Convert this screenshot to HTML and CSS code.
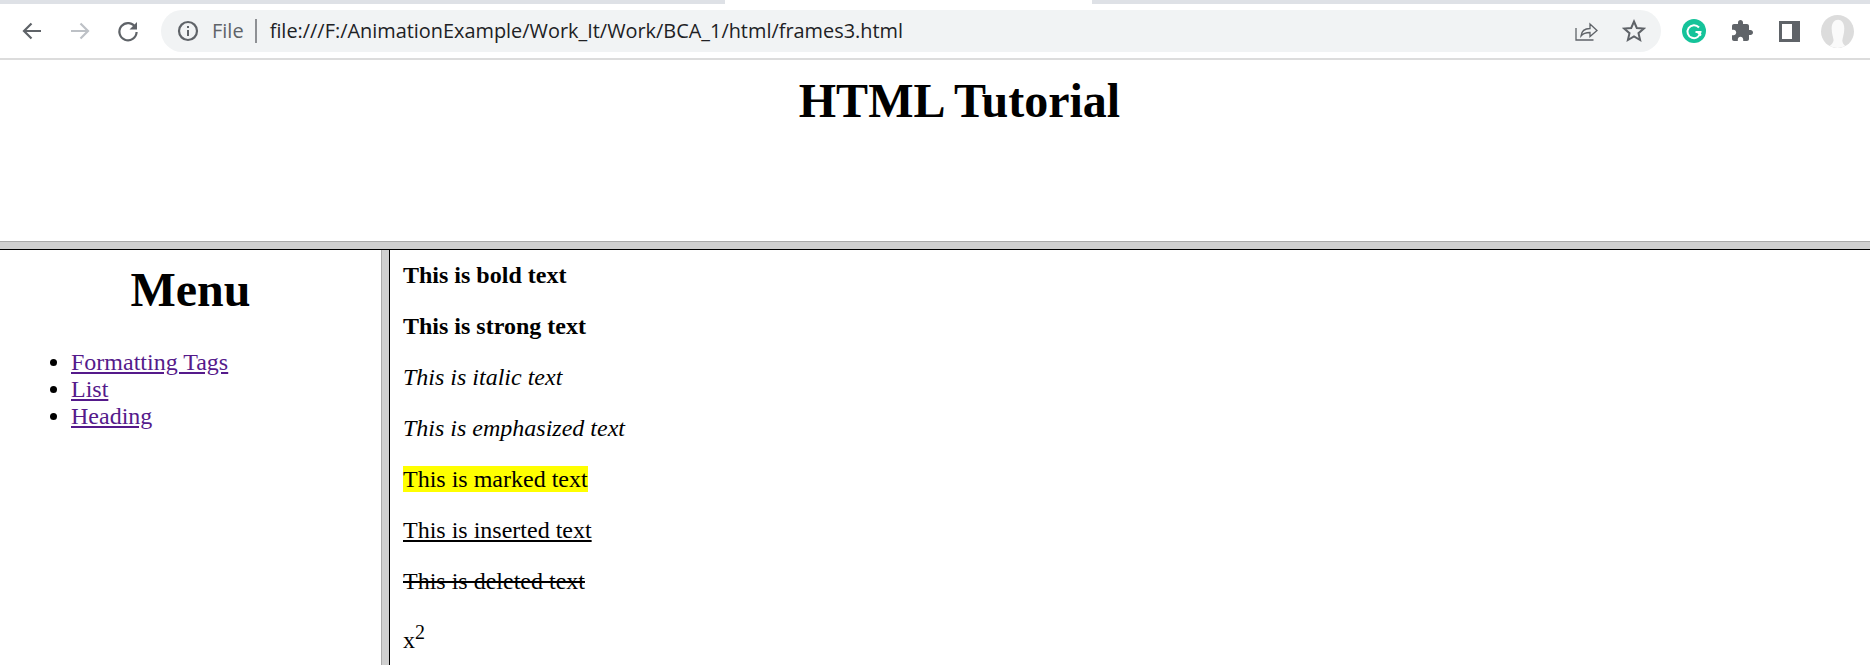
FILE: index.html
```html
<!DOCTYPE html>
<html lang="en">
<head>
<meta charset="utf-8">
<title>frames3</title>
<link rel="stylesheet" href="styles.css">
</head>
<body>
<header class="chrome">
  <div class="tabstrip"><div class="tabstrip-gap"></div></div>
  <div class="toolbar">
    <div class="nav">
      <svg class="ic" viewBox="0 0 24 24"><path class="st" d="M21 12H4M11.500 4.500 4 12l7.500 7.500"/></svg>
      <svg class="ic dim" viewBox="0 0 24 24"><path class="st" d="M3 12h17M12.500 4.500 20 12l-7.500 7.500"/></svg>
      <svg class="ic" viewBox="0 0 24 24"><path class="st" d="M19.500 8.500A8.600 8.600 0 1 0 20.600 13"/><path class="fl" d="M21 3v7.500h-7.500z"/></svg>
    </div>
    <div class="omnibox">
      <svg class="info" viewBox="0 0 24 24"><circle class="st" cx="12" cy="12" r="9"/><path class="fl" d="M11 11h2v6h-2zM11 7h2v2h-2z"/></svg>
      <span class="scheme">File</span>
      <span class="sep"></span>
      <span class="url">file:///F:/AnimationExample/Work_It/Work/BCA_1/html/frames3.html</span>
      <svg class="share" viewBox="0 0 24 24"><path class="thin" d="M2 9v12h17.500M7 17c.5-5 4-7.500 9-7.500V5l7 6.500-7 6V13.500c-4 0-7 1-9 3.500z"/></svg>
      <svg class="star" viewBox="0 0 24 24"><path class="mid" d="m12 2.500 2.800 6.500 7 .6-5.300 4.600 1.600 6.800L12 17.400 5.900 21l1.600-6.800L2.200 9.600l7-.6z"/></svg>
    </div>
    <div class="actions">
      <svg class="grammarly" viewBox="0 0 24 24"><circle class="g-bg" cx="12" cy="12" r="12"/><path class="g-fg" d="M17 8.500A6.500 6.500 0 1 0 18.500 13h-5"/><path class="g-fg" d="M15.500 13l3.500 3.500"/></svg>
      <svg class="puzzle" viewBox="0 0 24 24"><path class="fl" d="M20.500 11H19V7c0-1.100-.9-2-2-2h-4V3.500C13 2.120 11.880 1 10.500 1S8 2.120 8 3.500V5H4c-1.100 0-1.990.9-1.990 2v3.800H3.500c1.490 0 2.700 1.210 2.700 2.700s-1.210 2.700-2.700 2.700H2V20c0 1.100.9 2 2 2h3.800v-1.500c0-1.490 1.210-2.700 2.700-2.700 1.490 0 2.700 1.210 2.700 2.700V22H17c1.100 0 2-.9 2-2v-4h1.500c1.380 0 2.500-1.120 2.500-2.500S21.880 11 20.500 11z"/></svg>
      <span class="panel"></span>
      <svg class="avatar" viewBox="0 0 34 34"><circle class="a-bg" cx="17" cy="17" r="17"/><path class="a-fg" d="M11 14c0-6 3-9 6.500-9S24 8 24 14c0 5-1.500 9-2 12-.2 2 1 4 3 6-5 2.500-11 2.500-16 0 2-2 3.500-3 4-6-.5-3-2-7-2-12z"/></svg>
    </div>
  </div>
</header>
<main class="frames">
  <section class="top-frame">
    <h1 class="title">HTML Tutorial</h1>
  </section>
  <div class="hdivider"></div>
  <div class="lower">
    <nav class="menu-frame">
      <h1 class="menu-title">Menu</h1>
      <ul class="menu-list">
        <li><a href="#a">Formatting Tags</a></li>
        <li><a href="#b">List</a></li>
        <li><a href="#c">Heading</a></li>
      </ul>
    </nav>
    <div class="vdivider"></div>
    <article class="content-frame">
      <p><b>This is bold text</b></p>
      <p><strong>This is strong text</strong></p>
      <p><i>This is italic text</i></p>
      <p><em>This is emphasized text</em></p>
      <p><mark>This is marked text</mark></p>
      <p><ins>This is inserted text</ins></p>
      <p><del>This is deleted text</del></p>
      <p>x<sup>2</sup></p>
    </article>
  </div>
</main>
</body>
</html>
```
FILE: styles.css
```css
html, body {
  margin: 0;
  padding: 0;
  height: 100%;
  overflow: hidden;
  background: #fff;
}
body {
  font-family: "Liberation Serif", "Times New Roman", serif;
  font-size: 24px;
  line-height: 27px;
  color: #000;
  display: flex;
  flex-direction: column;
}
.chrome { flex: none; height: 60px; font-family: "Open Sans", "Noto Sans", sans-serif; }
.tabstrip { height: 4px; background: #dee1e6; display: flex; padding-left: 725px; }
.tabstrip-gap { width: 367px; background: #fff; }
.toolbar {
  height: 56px;
  border-bottom: 2px solid #dcdcdc;
  display: flex;
  align-items: center;
  box-sizing: border-box;
  background: #fff;
}
.nav { display: flex; width: 161px; flex: none; padding-left: 20px; gap: 24px; box-sizing: border-box; }
.ic { width: 24px; height: 24px; color: #5f6368; }
.dim { color: #bdc1c6; }
.st { fill: none; stroke: currentColor; stroke-width: 2.2; }
.fl { fill: currentColor; stroke: none; }
.thin { fill: none; stroke: currentColor; stroke-width: 1.3; }
.mid { fill: none; stroke: currentColor; stroke-width: 2; }
.omnibox {
  width: 1500px;
  height: 42px;
  flex: none;
  border-radius: 21px;
  background: #f1f3f4;
  display: flex;
  align-items: center;
  padding: 0 15px 0 15px;
  box-sizing: border-box;
}
.info { width: 24px; height: 24px; color: #5f6368; flex: none; }
.scheme { margin-left: 12px; font-size: 20px; line-height: 24px; color: #5f6368; }
.sep { width: 2px; height: 24px; background: #8e9094; margin: 0 13px 0 11px; }
.url { flex: 1; font-size: 19.9px; line-height: 24px; color: #202124; white-space: nowrap; }
.share { width: 24px; height: 24px; color: #5f6368; flex: none; margin-right: 24px; }
.star { width: 24px; height: 24px; color: #5f6368; flex: none; }
.actions { flex: 1; display: flex; align-items: center; padding-left: 21px; }
.grammarly { width: 24px; height: 24px; flex: none; }
.g-bg { fill: #15c39a; }
.g-fg { fill: none; stroke: #fff; stroke-width: 2; }
.puzzle { width: 24px; height: 24px; color: #5f6368; flex: none; margin-left: 24px; }
.panel { width: 21px; height: 21px; border: 3px solid #5f6368; border-right-width: 8px; box-sizing: border-box; margin-left: 25px; flex: none; }
.avatar { width: 33px; height: 33px; flex: none; margin-left: 21px; }
.a-bg { fill: #dcdcdc; }
.a-fg { fill: #fafafa; }

.frames { flex: 1; display: flex; flex-direction: column; min-height: 0; }
.top-frame { height: 181px; flex: none; box-sizing: border-box; padding: 13px 12px 0 61px; text-align: center; }
h1 { font-size: 48px; line-height: 55px; font-weight: 700; margin: 0; }
.hdivider { height: 9px; flex: none; box-sizing: border-box; background: #cfcfcf; border-top: 1px solid #a9a9a9; border-bottom: 1px solid #000; }
.lower { flex: 1; display: flex; min-height: 0; }
.menu-frame { width: 381px; flex: none; box-sizing: border-box; padding: 12px; }
.menu-title { text-align: center; margin-bottom: 32px; }
.menu-list { margin: 0; padding-left: 59px; }
.menu-list a { color: #551a8b; }
.vdivider { width: 9px; flex: none; box-sizing: border-box; background: #cfcfcf; border-left: 1px solid #a9a9a9; border-right: 1px solid #000; }
.content-frame { flex: 1; padding: 12px 12px 12px 13px; overflow: hidden; }
.content-frame p { margin: 0 0 24px; }
mark { background: #ff0; }
sup { font-size: 20px; }
```
